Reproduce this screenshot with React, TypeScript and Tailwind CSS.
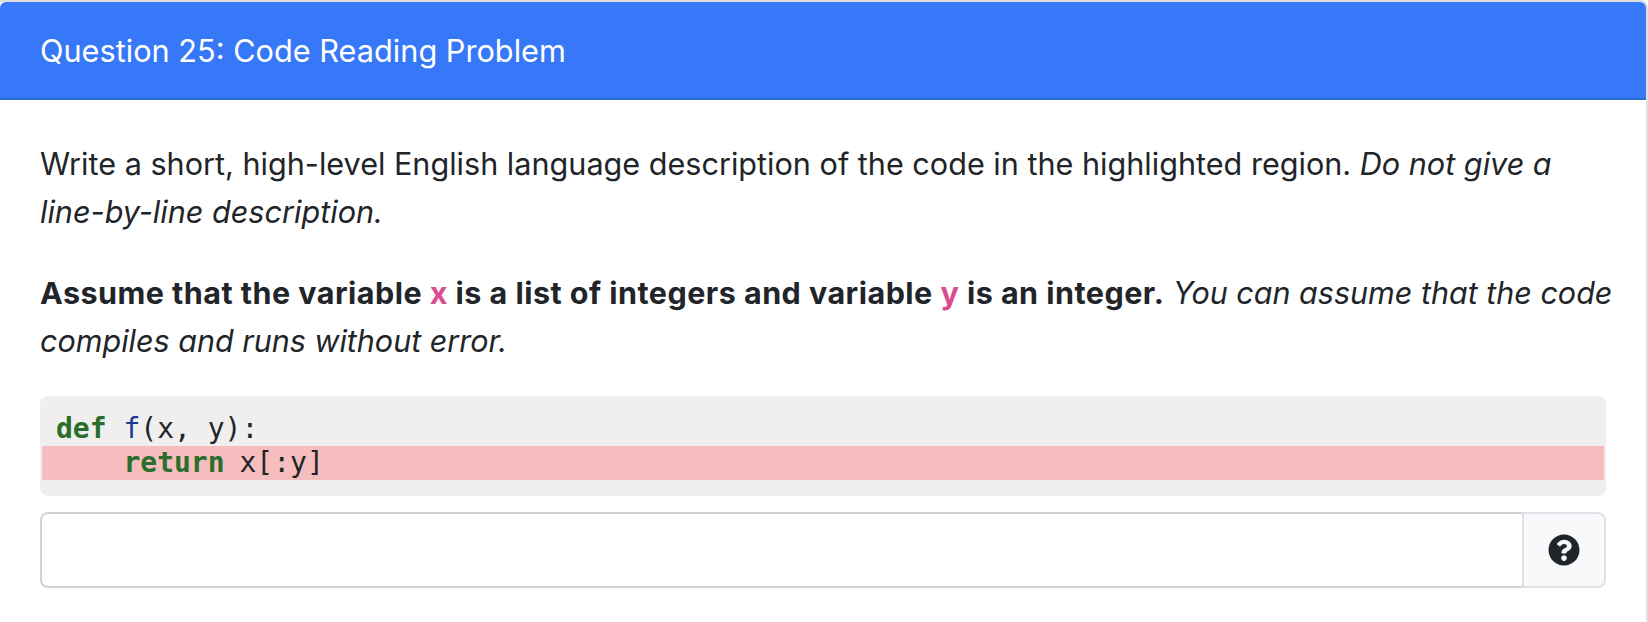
import { FaQuestionCircle } from "react-icons/fa"

export default function App() {
  return (
    <div className="h-[622px] w-[1648px] overflow-hidden bg-white font-['Inter',sans-serif] text-[#212529]">
      <div className="h-[622px] rounded-tr-[8px] border-t-2 border-r-2 border-[#dfdfdf]">
        <div className="flex h-[98px] items-center rounded-t-[6px] border-b-2 border-[#2f6bd0] bg-[#3778f8] px-10 pt-[2px] text-[30.7px] text-white">
          Question 25: Code Reading Problem
        </div>
        <div className="px-10 pt-10">
          <p className="text-[30.6px] leading-[48px]">
            Write a short, high-level English language description of the code in the highlighted region.{" "}
            <em>Do not give a line-by-line description.</em>
          </p>
          <p className="mt-[33px] -mr-4 text-[30.5px] leading-[48px]">
            <strong className="tracking-[0.47px]">
              Assume that the variable <span className="text-[#dc4b8f]">x</span> is a list of integers and variable{" "}
              <span className="text-[#dc4b8f]">y</span> is an integer.
            </strong>{" "}
            <em>You can assume that the code compiles and runs without error.</em>
          </p>
          <div className="mt-[31px] h-[100px] rounded-[8px] bg-[#efefef] px-[2px] pt-4 font-['DejaVu_Sans_Mono',monospace] text-[28px] leading-[34px] whitespace-pre">
            <div className="pl-[14px]">
              <b className="text-[#2b6e2b]">def</b> <span className="text-[#1a3a94]">f</span>(x, y):
            </div>
            <div className="bg-[#f5bdbd] pl-[14px]">
              {"    "}
              <b className="text-[#2b6e2b]">return</b> <span className="-ml-[2px]">x[:y]</span>
            </div>
          </div>
          <div className="mt-4 flex h-[76px]">
            <input className="min-w-0 flex-1 rounded-l-[8px] border-2 border-r-0 border-[#ced4da] bg-white outline-none" />
            <div className="flex w-[84px] items-center justify-center rounded-r-[8px] border-2 border-[#dee2e6] bg-[#f8f9fa]">
              <FaQuestionCircle className="h-8 w-8 text-[#212529]" />
            </div>
          </div>
        </div>
      </div>
    </div>
  )
}
